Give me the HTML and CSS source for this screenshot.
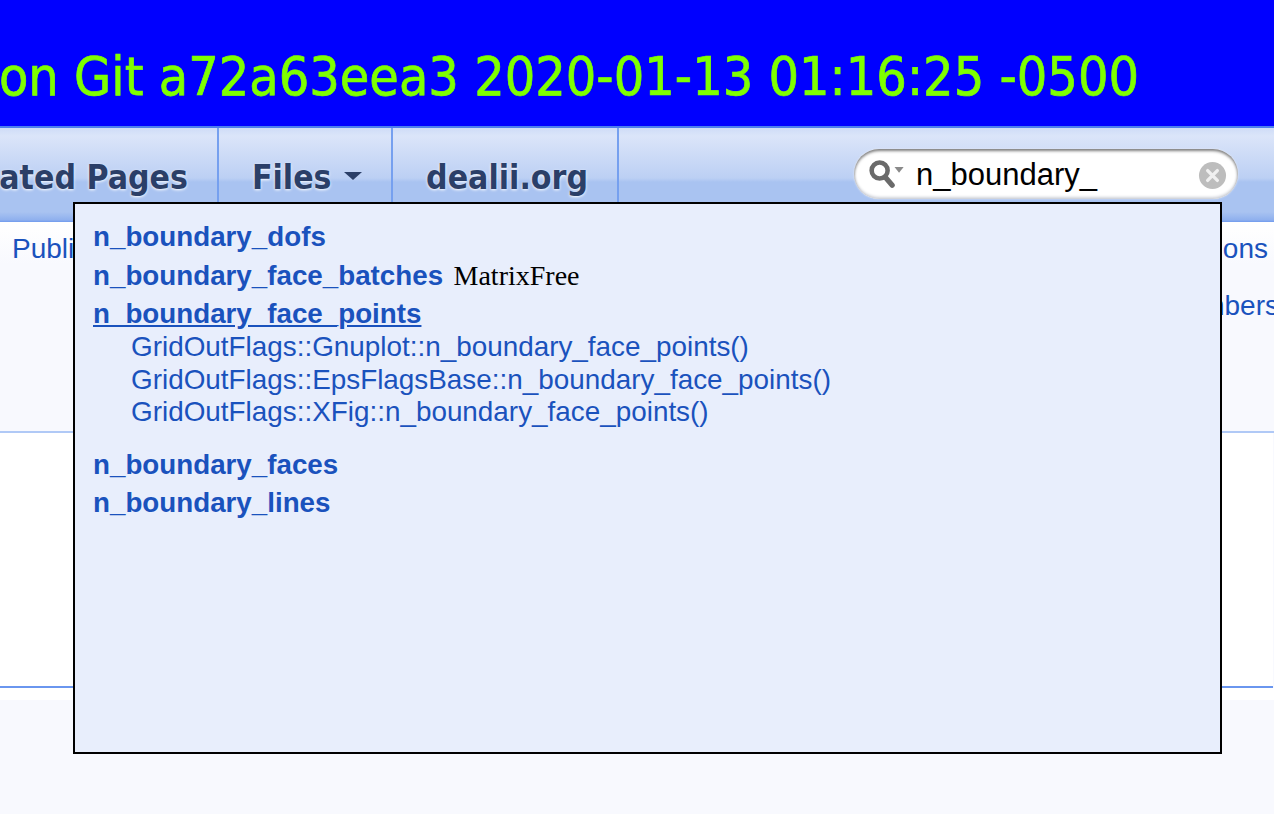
FILE: index.html
```html
<!DOCTYPE html>
<html lang="en">
<head>
<meta charset="utf-8">
<title>deal.II documentation</title>
<link rel="stylesheet" href="styles.css">
</head>
<body>
<header class="banner"><h1 class="banner-title">The deal.II Library, Reference documentation on Git a72a63eea3 2020-01-13 01:16:25 -0500</h1></header>
<nav class="tabs">
  <div class="tab-list">
    <a class="tab">Related Pages</a>
    <a class="tab">Files <span class="caret"></span></a>
    <a class="tab">dealii.org</a>
  </div>
  <div class="search">
    <svg class="search-icon" viewBox="0 0 32 28" aria-hidden="true">
      <circle cx="10" cy="10" r="7" fill="#fff" stroke="#6a6a6a" stroke-width="4"/>
      <path d="M15 16l6 7" stroke="#6a6a6a" stroke-width="4.5" stroke-linecap="round"/>
      <path d="M23 7h8l-4 5z" fill="#8a8a8a"/>
    </svg>
    <span class="search-text">n_boundary_</span>
    <span class="search-clear">
      <svg viewBox="0 0 30 30" aria-hidden="true">
        <circle cx="15" cy="15" r="14" fill="#bdbdbd"/>
        <path d="M10 10l10 10M20 10L10 20" stroke="#f0f0f0" stroke-width="3.5" stroke-linecap="round"/>
      </svg>
    </span>
  </div>
</nav>
<section class="summary">
  <div class="summary-row"><a class="link">Public Member Functions</a><a class="link">Static Public Member Functions</a></div>
  <div class="summary-row summary-right"><a class="link">Related Members</a></div>
</section>
<section class="blank"></section>
<div class="tail"></div>
<aside class="popup">
  <ul class="results">
    <li class="result"><a class="name">n_boundary_dofs</a></li>
    <li class="result"><a class="name">n_boundary_face_batches</a> <span class="scope">MatrixFree</span></li>
    <li class="result result-open">
      <a class="name name-active">n_boundary_face_points</a>
      <div class="children">
        <a class="child">GridOutFlags::Gnuplot::n_boundary_face_points()</a>
        <a class="child">GridOutFlags::EpsFlagsBase::n_boundary_face_points()</a>
        <a class="child">GridOutFlags::XFig::n_boundary_face_points()</a>
      </div>
    </li>
    <li class="result"><a class="name">n_boundary_faces</a></li>
    <li class="result"><a class="name">n_boundary_lines</a></li>
  </ul>
</aside>
</body>
</html>
```
FILE: styles.css
```css
html, body { margin: 0; padding: 0; }
body {
  position: relative;
  width: 1274px;
  height: 814px;
  overflow: hidden;
  background: #f8f9fe;
  font-family: "Liberation Sans", Arial, sans-serif;
}
.banner {
  height: 126px;
  box-sizing: border-box;
  background: #0000ff;
  display: flex;
  justify-content: flex-end;
  align-items: center;
  padding: 27px 135px 0 0;
  overflow: hidden;
}
.banner-title {
  margin: 0;
  flex: none;
  white-space: nowrap;
  color: #7fff00;
  font: 400 53.4px "DejaVu Sans Condensed", "DejaVu Sans", sans-serif;
  -webkit-text-stroke: .7px #7fff00;
}
.tabs {
  height: 94px;
  border-top: 2px solid #4d7fee;
  display: flex;
  background: linear-gradient(#cfdcf7 0, #dbe5f9 8px, #bcd0f4 50px, #a9c3f1 54px, #a9c3f1 84px, #8fb0ee 92px, #6f9aee 94px);
}
.tab-list {
  width: 619px;
  flex: none;
  display: flex;
  justify-content: flex-end;
  overflow: hidden;
  height: 96px;
}
.tab {
  flex: none;
  border-right: 2px solid #76a0ef;
  display: block;
  padding: 3px 29px 0 33px;
  color: #2b3f68;
  font: 700 33.5px/94px "DejaVu Sans Condensed", "DejaVu Sans", sans-serif;
  text-shadow: 0 1px 3px #fff;
  white-space: nowrap;
}
.caret {
  display: inline-block;
  vertical-align: middle;
  width: 0;
  height: 0;
  margin: -8px 0 0 2px;
  border: 9px solid transparent;
  border-top: 8px solid #2b3f68;
  border-bottom: 0;
}
.search {
  margin: 21px 0 0 235px;
  width: 384px;
  height: 50px;
  box-sizing: border-box;
  flex: none;
  background: #fff;
  border-radius: 25px;
  box-shadow: inset 0 2px 3px #7d7d7d, inset 0 -2px 3px #d0d3da, 0 0 2px #e8ecf5;
  display: flex;
  align-items: center;
  padding: 2px 11px 0 14px;
}
.search-icon { width: 37px; height: 32px; flex: none; filter: blur(.5px); }
.search-text { font-size: 31px; color: #000; margin-left: 11px; flex: 1; }
.search-clear { width: 29px; height: 29px; flex: none; filter: blur(.5px); }
.search-clear svg { width: 29px; height: 29px; display: block; }
.summary {
  height: 211px;
  box-sizing: border-box;
  border-top: 2px solid #fff;
  border-bottom: 2px solid #b0c9f6;
  display: flex;
  flex-direction: column;
  background: linear-gradient(#fff, #f8f9fe 40px);
}
.summary-row {
  display: flex;
  justify-content: space-between;
  white-space: nowrap;
  font-size: 28px;
  height: 48px;
  padding: 0 6px 0 12px;
  margin-top: 9px;
  overflow: hidden;
}
.summary-right { justify-content: flex-end; padding-right: 0; margin-right: -5px; }
.link { color: #1a52bd; }
.blank { height: 255px; background: #fff; border-bottom: 2px solid #6a96ef; box-sizing: border-box; margin-right: 1px; }
.tail { height: 12px; background: #fff; }
.popup {
  position: absolute;
  left: 73px;
  top: 202px;
  width: 1149px;
  height: 552px;
  box-sizing: border-box;
  border: 2px solid #000;
  background: #e8eefc;
  padding: 13px 18px;
}
.results { list-style: none; margin: 0; padding: 0; }
.result { height: 38.7px; line-height: 39px; white-space: nowrap; }
.result-open { height: auto; padding-bottom: 15.5px; }
.name { color: #1a52bd; font-size: 27.76px; font-weight: 700; }
.name-active { text-decoration: underline; }
.scope { font-family: "Liberation Serif", serif; font-size: 28px; color: #000; margin-left: 6px; }
.children { margin: -6.5px 0 0 38px; }
.child { display: block; color: #1a52bd; font-size: 27.86px; line-height: 32.8px; }
```
